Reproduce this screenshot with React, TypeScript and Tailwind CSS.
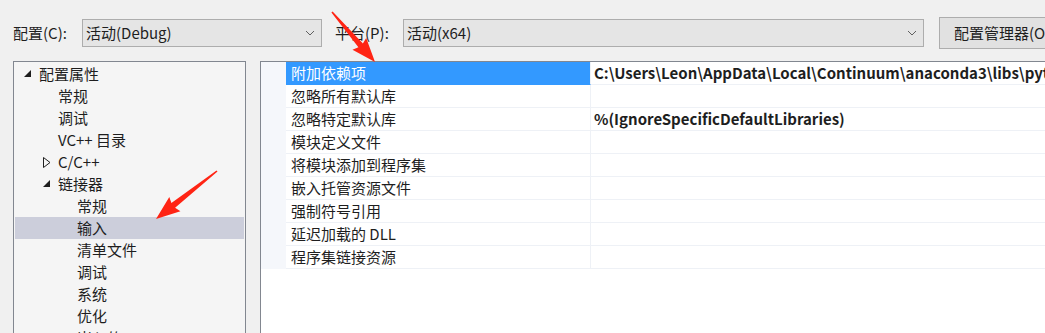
import React from 'react';

const FONT = "font-['Microsoft_YaHei_UI','Noto_Sans_CJK_SC',sans-serif]";

type TreeItem = { label: string; level: number; toggle?: 'open' | 'closed'; selected?: boolean };

const tree: TreeItem[] = [
  { label: '配置属性', level: 0, toggle: 'open' },
  { label: '常规', level: 1 },
  { label: '调试', level: 1 },
  { label: 'VC++ 目录', level: 1 },
  { label: 'C/C++', level: 1, toggle: 'closed' },
  { label: '链接器', level: 1, toggle: 'open' },
  { label: '常规', level: 2 },
  { label: '输入', level: 2, selected: true },
  { label: '清单文件', level: 2 },
  { label: '调试', level: 2 },
  { label: '系统', level: 2 },
  { label: '优化', level: 2 },
  { label: '嵌入的 IDL', level: 2 },
];

const props: { name: string; value?: string; selected?: boolean }[] = [
  { name: '附加依赖项', value: 'C:\\Users\\Leon\\AppData\\Local\\Continuum\\anaconda3\\libs\\python36.lib', selected: true },
  { name: '忽略所有默认库' },
  { name: '忽略特定默认库', value: '%(IgnoreSpecificDefaultLibraries)' },
  { name: '模块定义文件' },
  { name: '将模块添加到程序集' },
  { name: '嵌入托管资源文件' },
  { name: '强制符号引用' },
  { name: '延迟加载的 DLL' },
  { name: '程序集链接资源' },
];

const Chevron = () => (
  <svg width="10" height="6" viewBox="0 0 10 6" className="shrink-0">
    <path d="M1 1 L5 5 L9 1" fill="none" stroke="#606060" strokeWidth="1" />
  </svg>
);

const Toggle: React.FC<{ kind: 'open' | 'closed' }> = ({ kind }) =>
  kind === 'open' ? (
    <svg width="8" height="8" viewBox="0 0 8 8">
      <path d="M7 0 L7 7 L0 7 Z" fill="#1e1e1e" />
    </svg>
  ) : (
    <svg width="8" height="11" viewBox="0 0 8 11">
      <path d="M0.5 0.5 L7 5.5 L0.5 10.5 Z" fill="none" stroke="#1e1e1e" strokeWidth="1" />
    </svg>
  );

const Arrow: React.FC<{ x1: number; y1: number; x2: number; y2: number }> = ({ x1, y1, x2, y2 }) => {
  const dx = x2 - x1;
  const dy = y2 - y1;
  const len = Math.hypot(dx, dy);
  const ux = dx / len;
  const uy = dy / len;
  const nx = -uy;
  const ny = ux;
  const head = 22;
  const bx = x2 - ux * head;
  const by = y2 - uy * head;
  const p = (x: number, y: number) => `${x.toFixed(1)},${y.toFixed(1)}`;
  const pts = [
    p(x1 + nx * 0.8, y1 + ny * 0.8),
    p(bx + nx * 3, by + ny * 3),
    p(bx + nx * 9 - ux * 2, by + ny * 9 - uy * 2),
    p(x2, y2),
    p(bx - nx * 9 - ux * 2, by - ny * 9 - uy * 2),
    p(bx - nx * 3, by - ny * 3),
    p(x1 - nx * 0.8, y1 - ny * 0.8),
  ].join(' ');
  return <polygon points={pts} fill="#ff2414" />;
};

export default function App() {
  return (
    <div className={`relative w-[1045px] h-[333px] overflow-hidden bg-[#f0f0f0] text-[15px] text-[#1e1e1e] ${FONT}`}>
      {/* toolbar */}
      <div className="flex items-center h-[32px] mt-[17px] pl-[13px] whitespace-nowrap">
        <span className="w-[69px] shrink-0">配置(C):</span>
        <div className="flex shrink-0 items-center justify-between w-[240px] h-[28px] border border-[#adadad] bg-[#e5e5e5] pl-[3px] pr-[6px]">
          <span>活动(Debug)</span>
          <Chevron />
        </div>
        <span className="w-[68px] shrink-0 pl-[13px] box-content">平台(P):</span>
        <div className="flex shrink-0 items-center justify-between w-[521px] h-[28px] border border-[#adadad] bg-[#e5e5e5] pl-[3px] pr-[6px]">
          <span>活动(x64)</span>
          <Chevron />
        </div>
        <div className="ml-[15px] flex items-center h-[32px] w-[130px] shrink-0 border border-[#adadad] bg-[#e1e1e1] pl-[14px]">
          配置管理器(O)
        </div>
      </div>

      {/* body */}
      <div className="flex mt-[12px] pl-[13px] h-[300px]">
        <div className="w-[233px] shrink-0 border border-[#828790] bg-[#f5f5f5] pt-px px-px">
          {tree.map((item, i) => (
            <div
              key={i}
              className={`flex items-center h-[22px] whitespace-nowrap ${item.selected ? 'bg-[#cccedb]' : ''}`}
              style={{ paddingLeft: 9 + item.level * 19 }}
            >
              <span className="w-[15px] shrink-0 flex items-center">{item.toggle && <Toggle kind={item.toggle} />}</span>
              <span>{item.label}</span>
            </div>
          ))}
        </div>

        <div className="ml-[14px] flex-1 min-w-0 border-l border-t border-[#828790] bg-white">
          {props.map((row, i) => (
            <div key={i} className="flex h-[23px] whitespace-nowrap">
              <div className="w-[25px] shrink-0 bg-[#f5f7fb]" />
              <div
                className={`w-[305px] shrink-0 flex items-center pl-[5px] border-b border-r border-[#eef1f6] ${
                  row.selected ? 'bg-[#3399ff] text-white border-b-[#3399ff]' : ''
                }`}
              >
                {row.name}
              </div>
              <div className="flex-1 min-w-0 flex items-center pl-[3px] font-bold border-b border-[#eef1f6] overflow-hidden">
                {row.value}
              </div>
            </div>
          ))}
        </div>
      </div>

      {/* annotation arrows */}
      <svg className="absolute inset-0 pointer-events-none" width="1045" height="333">
        <Arrow x1={332} y1={12} x2={375} y2={62} />
        <Arrow x1={217} y1={171} x2={156} y2={219} />
      </svg>
    </div>
  );
}
